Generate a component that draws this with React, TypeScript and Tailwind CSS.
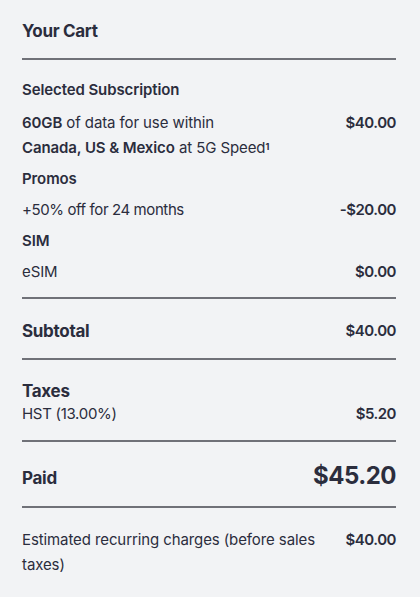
import React from "react";

const Line = () => <div className="h-[2px] bg-[#707178]" />;

export default function App() {
  return (
    <div className="w-[420px] h-[597px] bg-[#f2f3f5] pl-[22px] pr-[24px] text-[#2b2d3d] font-['Inter',sans-serif] tracking-[-0.1px]">
      <div className="h-[58px] pt-[20px]">
        <div className="text-[17px] leading-[22px] font-bold tracking-[-0.3px]">Your Cart</div>
      </div>
      <Line />
      <div className="pt-[18px] pb-[13px] flex flex-col text-[15px]">
        <div className="leading-[24px] font-semibold">Selected Subscription</div>
        <div className="mt-[8px] flex justify-between">
          <div className="leading-[25px]">
            <div>
              <span className="font-semibold">60GB</span> of data for use within
            </div>
            <div>
              <span className="font-semibold">Canada, US &amp; Mexico</span> at 5G Speed
              <sup className="text-[9px] font-bold relative -top-[3px]">1</sup>
            </div>
          </div>
          <div className="leading-[25px] font-semibold tracking-[-0.5px]">$40.00</div>
        </div>
        <div className="mt-[7px] leading-[24px] font-semibold">Promos</div>
        <div className="mt-[7px] leading-[24px] flex justify-between">
          <span className="tracking-[-0.4px]">+50% off for 24 months</span>
          <span className="font-semibold tracking-[-0.5px]">-$20.00</span>
        </div>
        <div className="mt-[7px] leading-[24px] font-semibold">SIM</div>
        <div className="mt-[7px] leading-[24px] flex justify-between">
          <span>eSIM</span>
          <span className="font-semibold tracking-[-0.5px]">$0.00</span>
        </div>
      </div>
      <Line />
      <div className="pt-[20px] pb-[15px] flex justify-between items-center leading-[24px]">
        <span className="text-[17px] font-bold tracking-[-0.3px]">Subtotal</span>
        <span className="text-[15px] font-semibold tracking-[-0.5px]">$40.00</span>
      </div>
      <Line />
      <div className="pt-[19px] pb-[15px]">
        <div className="text-[17px] leading-[24px] font-bold tracking-[-0.3px]">Taxes</div>
        <div className="flex justify-between text-[15px] leading-[22px]">
          <span className="tracking-[-0.3px]">HST (13.00%)</span>
          <span className="font-semibold tracking-[-0.5px]">$5.20</span>
        </div>
      </div>
      <Line />
      <div className="pt-[16px] pb-[12px] h-[64px] flex justify-between items-center">
        <span className="text-[17px] font-bold leading-[24px] mt-[3px] tracking-[-0.3px]">Paid</span>
        <span className="text-[24px] font-bold leading-[36px] tracking-[-0.5px]">$45.20</span>
      </div>
      <Line />
      <div className="pt-[19px] flex justify-between gap-4 text-[15px] leading-[25px]">
        <span className="w-[300px]">Estimated recurring charges (before sales taxes)</span>
        <span className="font-semibold tracking-[-0.5px]">$40.00</span>
      </div>
    </div>
  );
}
